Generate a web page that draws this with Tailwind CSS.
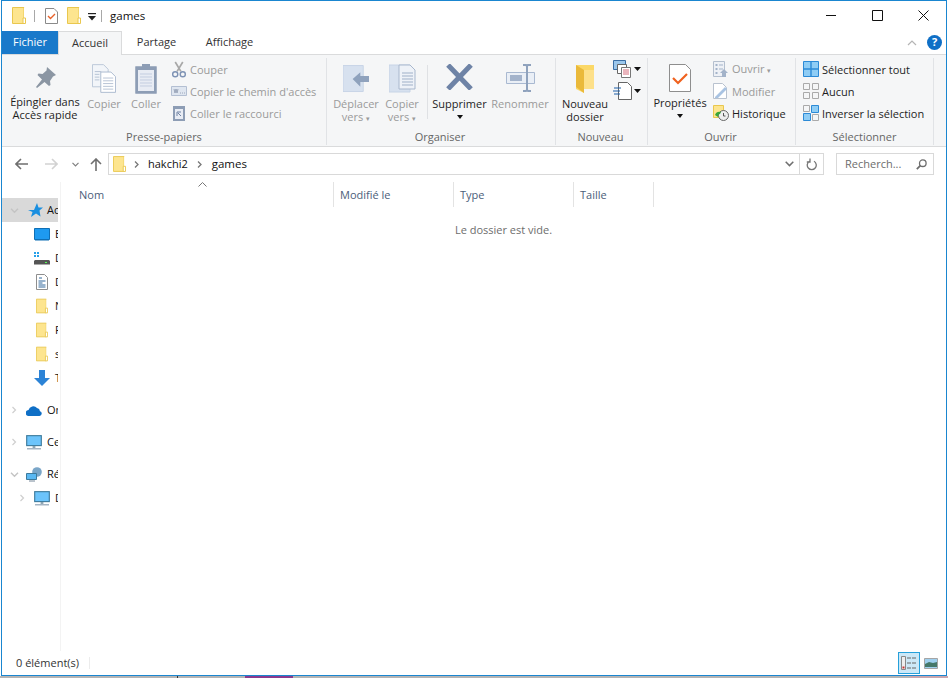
<!DOCTYPE html>
<html lang="fr">
<head>
<meta charset="utf-8">
<title>games</title>
<script src="https://cdn.jsdelivr.net/npm/@tailwindcss/browser@4"></script>
</head>
<body class="w-[948px] h-[678px] overflow-hidden bg-white relative font-['Open_Sans','Noto_Sans',sans-serif] text-[11px] text-[#1e1e1e]">
<svg class="hidden">
  <symbol id="fold" viewBox="0 0 14 17"><path d="M.5.5h11.5v16H.5z" fill="#fde58f" stroke="#e9c74e"/><path d="M12 .5h1.2v12H12z" fill="#fff"/><path d="M11 11h2.5v5.5H11z" fill="#fff" stroke="#e9c74e"/></symbol>
  <symbol id="pc" viewBox="0 0 17 16"><rect x=".7" y=".7" width="15.6" height="10.6" fill="#6cc4fb" stroke="#3d7a9c" stroke-width="1.2"/><path d="M7 12h3v1.6H7z" fill="#6b8a9c"/><path d="M1 14h15v1.4H1z" fill="#9ab"/></symbol>
  <symbol id="chev" viewBox="0 0 8 10"><path d="M2 1l4 4-4 4" fill="none" stroke="#cfcfcf" stroke-width="1.6"/></symbol>
  <symbol id="chevd" viewBox="0 0 10 8"><path d="M1 2l4 4 4-4" fill="none" stroke="#c4c4c4" stroke-width="1.6"/></symbol>
</svg>

<!-- desktop sliver below the window -->
<div class="absolute left-0 right-0 top-[676px] h-[2px] bg-[#b4b4b4]"></div>
<div class="absolute left-[177px] top-[676px] w-px h-[2px] bg-[#333]"></div>
<div class="absolute left-[245px] top-[676px] w-[48px] h-[2px] bg-[#8a3a8e]"></div>
<div class="absolute left-[910px] right-0 top-[676px] h-[2px] bg-[#c9a6ae]"></div>

<div class="absolute left-px top-0 w-[946px] h-[676px] border border-[#1a86d0] bg-white flex flex-col">

  <!-- title bar -->
  <div class="h-[29px] flex items-center shrink-0">
    <svg class="w-[14px] h-[17px] ml-[10px]"><use href="#fold"/></svg>
    <span class="w-px h-[12px] bg-[#a8a8a8] ml-[8px]"></span>
    <svg class="w-[13px] h-[16px] ml-[10px]" viewBox="0 0 13 16"><path d="M.5.5h8.500l3.500 3.500v11.500H.5z" fill="#fff" stroke="#8a8a8a"/><path d="M3 8l2.500 2.500L10 6" fill="none" stroke="#e8622a" stroke-width="1.400"/></svg>
    <svg class="w-[14px] h-[17px] ml-[9px]"><use href="#fold"/></svg>
    <svg class="w-[8px] h-[8px] ml-[7px] mt-[2px]" viewBox="0 0 8 8"><path d="M0 0h8v1.200H0z" fill="#222"/><path d="M0 3h8L4 7.500z" fill="#222"/></svg>
    <span class="w-px h-[12px] bg-[#a8a8a8] ml-[5px]"></span>
    <span class="ml-[8px] text-[#111] text-[11.5px]">games</span>
    <div class="ml-auto flex items-center mr-[17px]">
      <svg class="w-[11px] h-[11px]" viewBox="0 0 11 11"><path d="M0 5.500h10" stroke="#111" fill="none"/></svg>
      <svg class="w-[11px] h-[11px] ml-[35px]" viewBox="0 0 11 11"><path d="M.5.500h10v10H.5z" stroke="#111" fill="none"/></svg>
      <svg class="w-[11px] h-[11px] ml-[35px]" viewBox="0 0 11 11"><path d="M.5.500l10 10M10.500.500l-10 10" stroke="#111" fill="none"/></svg>
    </div>
  </div>

  <!-- tabs -->
  <div class="h-[25px] flex items-end relative shrink-0 border-b border-[#dadbdc] text-[#333]">
    <div class="w-[56px] h-[23px] bg-[#1979ca] text-white flex items-center justify-center">Fichier</div>
    <div class="w-[64px] h-[24px] -mb-px bg-[#f5f6f7] border border-b-0 border-[#dadbdc] flex items-center justify-center">Accueil</div>
    <div class="w-[69px] h-[23px] flex items-center justify-center">Partage</div>
    <div class="w-[77px] h-[23px] flex items-center justify-center">Affichage</div>
    <div class="ml-auto flex items-center h-[23px] mr-[4px]">
      <svg class="w-[10px] h-[6px]" viewBox="0 0 10 6"><path d="M1 5l4-4 4 4" fill="none" stroke="#b5b5b5" stroke-width="1.200"/></svg>
      <span class="ml-[10px] w-[15px] h-[15px] rounded-full bg-[#0f6fc6] text-white text-[11px] font-bold flex items-center justify-center">?</span>
    </div>
  </div>

  <!-- ribbon -->
  <div class="h-[92px] shrink-0 flex bg-[#f5f6f7] border-b border-[#dadbdc] leading-[13px]">

    <!-- Presse-papiers -->
    <div class="w-[325px] flex flex-col mt-[3px] mb-[1px] border-r border-[#e1e3e6]">
      <div class="flex flex-1 pl-[4px]">
        <div class="w-[78px] flex flex-col items-center pt-[5px]">
          <svg class="w-[24px] h-[24px] mb-[5px] mt-[3px]" viewBox="0 0 24 24"><path d="M14 1l9 8-3 1.500-3 4.500.5 4-1.500 1-4.500-4L4 22l-1-1 6-7.500-4.500-4.500 1-1.500 4 .5 4-3.500z" fill="#8b96a3"/></svg>
          <span class="text-center">Épingler dans<br>Accès rapide</span>
        </div>
        <div class="w-[40px] flex flex-col items-center pt-[5px] text-[#9a9a9a]">
          <svg class="w-[24px] h-[31px] mb-[3px]" viewBox="0 0 26 31"><path d="M.5.500h12l5 5v19H.5z" fill="#f2f5f9" stroke="#b7c4d6"/><path d="M9.500 8.500h11l5 5v17h-16z" fill="#fff" stroke="#a8b7cd"/><path d="M12 15h11M12 18h11M12 21h11M12 24h11M12 27h11M3 8h7M3 11h5M3 14h5M3 17h5" stroke="#b3c0d3"/></svg>
          <span>Copier</span>
        </div>
        <div class="w-[44px] flex flex-col items-center pt-[5px] text-[#9a9a9a]">
          <svg class="w-[22px] h-[31px] mb-[3px]" viewBox="0 0 22 31"><rect x=".8" y="3.800" width="20.400" height="26.400" fill="#8d9db5" stroke="#8d9db5"/><rect x="3" y="7" width="16" height="21" fill="#e8ecf4"/><path d="M5 11h12M5 14h12M5 17h12M5 20h12M5 23h12" stroke="#c3cde0"/><rect x="7" y="1" width="8" height="5" fill="#8d9db5"/></svg>
          <span>Coller</span>
        </div>
        <div class="flex flex-col ml-[3px] pt-0 text-[#9a9a9a]">
          <div class="h-[22px] flex items-center gap-[3px]">
            <svg class="w-[16px] h-[17px]" viewBox="0 0 16 18"><path d="M4 1l6 10M12 1L6 11" stroke="#a8a8a8" stroke-width="1.800" fill="none"/><circle cx="4" cy="14" r="2.700" fill="none" stroke="#7d92b4" stroke-width="1.500"/><circle cx="12" cy="14" r="2.700" fill="none" stroke="#7d92b4" stroke-width="1.500"/></svg>
            <span>Couper</span>
          </div>
          <div class="h-[22px] flex items-center gap-[3px]">
            <svg class="w-[16px] h-[10px]" viewBox="0 0 16 10"><path d="M.5.500h15v9H.5z" fill="#dfe6f0" stroke="#b3bfd2"/><path d="M3 3l1 4 1-4 1 4 1-4M9 7h1M11 7h1M13 7h1" stroke="#8a97ad" fill="none" stroke-width=".8"/></svg>
            <span>Copier le chemin d'accès</span>
          </div>
          <div class="h-[22px] flex items-center gap-[3px]">
            <svg class="w-[16px] h-[16px]" viewBox="0 0 16 16"><rect x="2" y="1" width="12" height="15" fill="#8d9db5"/><rect x="4" y="4" width="8" height="10" fill="#e8ecf4"/><path d="M6 11V7h4M7 8l3 3" stroke="#6f82a3" fill="none"/></svg>
            <span>Coller le raccourci</span>
          </div>
        </div>
      </div>
      <div class="h-[17px] flex items-center justify-center text-[#666]">Presse-papiers</div>
    </div>

    <!-- Organiser -->
    <div class="w-[229px] flex flex-col mt-[3px] mb-[1px] border-r border-[#e1e3e6]">
      <div class="flex flex-1 pl-[4px]">
        <div class="w-[50px] flex flex-col items-center pt-[6px] text-[#9a9a9a]">
          <svg class="w-[26px] h-[30px] mb-[3px]" viewBox="0 0 27 30"><path d="M0 1h21v27H0z" fill="#d7e1ef" stroke="#c7d4e6"/><path d="M10 15l8-7v4h9v6h-9v5z" fill="#8fa2bd"/></svg>
          <span class="text-center">Déplacer<br>vers <span class="text-[7px] align-middle">▾</span></span>
        </div>
        <div class="w-[42px] flex flex-col items-center pt-[6px] text-[#9a9a9a]">
          <svg class="w-[27px] h-[30px] mb-[3px]" viewBox="0 0 27 30"><path d="M0 1h21v27H0z" fill="#d7e1ef" stroke="#c7d4e6"/><path d="M10 1h11l5 5v19H10z" fill="#eef2f8" stroke="#a8b7cd"/><path d="M13 9h11M13 12h11M13 15h11M13 18h11M13 21h11" stroke="#9fb0c8"/></svg>
          <span class="text-center">Copier<br>vers <span class="text-[7px] align-middle">▾</span></span>
        </div>
        <div class="w-px h-[54px] bg-[#dfe1e4] mt-[7px] ml-[4px]"></div>
        <div class="w-[63px] flex flex-col items-center pt-[6px]">
          <svg class="w-[27px] h-[26px] mb-[7px]" viewBox="0 0 27 26"><path d="M2 1l23 24M25 1L2 25" stroke="#6e83a6" stroke-width="5" fill="none"/></svg>
          <span>Supprimer</span>
          <svg class="w-[6px] h-[4px] mt-[5px]" viewBox="0 0 6 4"><path d="M0 0h6L3 4z" fill="#111"/></svg>
        </div>
        <div class="w-[58px] flex flex-col items-center pt-[6px] text-[#9a9a9a]">
          <svg class="w-[29px] h-[28px] mb-[5px]" viewBox="0 0 29 28"><path d="M.5 8.500h28v11H.5z" fill="#eaeff6" stroke="#a9b9d1"/><path d="M4 11h12v6H4z" fill="#a3b3cb"/><path d="M17 1h3l1 1 1-1h3M21 2v24M17 27h3l1-1 1 1h3" stroke="#8fa2bd" stroke-width="2" fill="none"/></svg>
          <span>Renommer</span>
        </div>
      </div>
      <div class="h-[17px] flex items-center justify-center pr-[2px] text-[#666]">Organiser</div>
    </div>

    <!-- Nouveau -->
    <div class="w-[92px] flex flex-col mt-[3px] mb-[1px] border-r border-[#e1e3e6]">
      <div class="flex flex-1 pl-[5px]">
        <div class="w-[48px] flex flex-col items-center pt-[7px]">
          <svg class="w-[19px] h-[29px] mb-[3px]" viewBox="0 0 19 29"><path d="M0 0h18v24H8v4L0 24z" fill="#fbd867"/><path d="M0 0l8 5v23L0 22z" fill="#eab93a"/><path d="M8 5h10v19H8z" fill="#fde08a"/></svg>
          <span class="text-center">Nouveau<br>dossier</span>
        </div>
        <div class="flex flex-col ml-[4px] pt-0">
          <div class="h-[22px] flex items-center gap-[1px]">
            <svg class="w-[20px] h-[18px]" viewBox="0 0 20 18"><path d="M.5.500h12v9H.5z" fill="#9cc7ec" stroke="#3a6ea5"/><path d="M4.500 4.500h9v9h-9z" fill="#fff" stroke="#666"/><path d="M8.500 7.500h9v10h-9z" fill="#fff" stroke="#777"/><path d="M10 10h6M10 12h6M10 14h6" stroke="#d56a7a"/></svg>
            <svg class="w-[7px] h-[4px]" viewBox="0 0 7 4"><path d="M0 0h7L3.500 4z" fill="#111"/></svg>
          </div>
          <div class="h-[22px] flex items-center gap-[1px]">
            <svg class="w-[20px] h-[18px]" viewBox="0 0 20 18"><path d="M5.500.500h9l4 4v13h-13z" fill="#fff" stroke="#666"/><path d="M1 6h7M0 9h7M1 12h6" stroke="#1d5fa8"/></svg>
            <svg class="w-[7px] h-[4px]" viewBox="0 0 7 4"><path d="M0 0h7L3.500 4z" fill="#111"/></svg>
          </div>
        </div>
      </div>
      <div class="h-[17px] flex items-center justify-center pr-[2px] text-[#666]">Nouveau</div>
    </div>

    <!-- Ouvrir -->
    <div class="w-[148px] flex flex-col mt-[3px] mb-[1px] border-r border-[#e1e3e6]">
      <div class="flex flex-1 pl-[5px]">
        <div class="w-[54px] flex flex-col items-center pt-[6px]">
          <svg class="w-[22px] h-[28px] mb-[4px]" viewBox="0 0 22 28"><path d="M.5.500h16l5 5v22H.5z" fill="#fff" stroke="#8e8e8e"/><path d="M4 14l5 5 9-9" fill="none" stroke="#f0621f" stroke-width="2.200"/></svg>
          <span>Propriétés</span>
          <svg class="w-[6px] h-[4px] mt-[5px]" viewBox="0 0 6 4"><path d="M0 0h6L3 4z" fill="#111"/></svg>
        </div>
        <div class="flex flex-col ml-[6px] pt-0">
          <div class="h-[22px] flex items-center gap-[4px] text-[#9a9a9a]">
            <svg class="w-[15px] h-[16px]" viewBox="0 0 15 16"><path d="M.5.500h11v15H.5z" fill="#eef1f6" stroke="#b4bfce"/><path d="M2.500 3h2v2h-2zM2.500 7h2v2h-2zM2.500 11h2v2h-2z" fill="#a3b3c9"/><path d="M6 4h4M6 8h4" stroke="#a3b3c9"/><path d="M11 8l4 4h-2v4h-4v-4H7z" fill="#a3b3c9"/></svg>
            <span>Ouvrir <span class="text-[7px] align-middle">▾</span></span>
          </div>
          <div class="h-[22px] flex items-center gap-[4px] text-[#9a9a9a]">
            <svg class="w-[15px] h-[16px]" viewBox="0 0 15 16"><path d="M.5.500h9l4 4v11H.5z" fill="#fff" stroke="#b9c2cf"/><path d="M2 14L12 4l2 2L5 15H2z" fill="#a9c3e2"/></svg>
            <span>Modifier</span>
          </div>
          <div class="h-[22px] flex items-center gap-[3px]">
            <svg class="w-[16px] h-[16px]" viewBox="0 0 16 16"><path d="M.5.500h10v12H.5z" fill="#fde58f" stroke="#e9c74e"/><circle cx="10.500" cy="10.500" r="5" fill="#eee" stroke="#666"/><path d="M10.500 8v3h2" stroke="#555" fill="none"/><path d="M2 10a5 5 0 0 1 6-3l-1 2h-1l-1 3-3-2z" fill="#3aa63a"/></svg>
            <span>Historique</span>
          </div>
        </div>
      </div>
      <div class="h-[17px] flex items-center justify-center pr-[2px] text-[#666]">Ouvrir</div>
    </div>

    <!-- Sélectionner -->
    <div class="w-[138px] flex flex-col mt-[3px] mb-[1px] border-r border-[#e1e3e6]">
      <div class="flex flex-col flex-1 pl-[7px] pt-0">
        <div class="h-[22px] flex items-center gap-[3px]">
          <svg class="w-[16px] h-[16px]" viewBox="0 0 16 16"><path d="M.5.500h15v15H.5z" fill="#8fcdf5" stroke="#2c8ad6"/><path d="M8 0v16M0 8h16" stroke="#2c8ad6" stroke-width="1.400"/></svg>
          <span>Sélectionner tout</span>
        </div>
        <div class="h-[22px] flex items-center gap-[3px]">
          <svg class="w-[16px] h-[16px]" viewBox="0 0 16 16"><path d="M.5.500h6v6h-6zM9.500.500h6v6h-6zM.5 9.500h6v6h-6zM9.500 9.500h6v6h-6z" fill="none" stroke="#aaa"/></svg>
          <span>Aucun</span>
        </div>
        <div class="h-[22px] flex items-center gap-[3px]">
          <svg class="w-[16px] h-[16px]" viewBox="0 0 16 16"><path d="M.5.500h6v6h-6zM9.500 9.500h6v6h-6z" fill="none" stroke="#aaa"/><path d="M8.500.500h7v7h-7zM.5 8.500h7v7h-7z" fill="#8fcdf5" stroke="#2c8ad6"/></svg>
          <span>Inverser la sélection</span>
        </div>
      </div>
      <div class="h-[17px] flex items-center justify-center text-[#666]">Sélectionner</div>
    </div>
  </div>

  <!-- address row -->
  <div class="h-[35px] shrink-0 flex items-center pb-[1px]">
    <svg class="w-[13px] h-[12px] ml-[13px]" viewBox="0 0 13 12"><path d="M6 1L1 6l5 5M1 6h12" fill="none" stroke="#6f6f6f" stroke-width="1.600"/></svg>
    <svg class="w-[13px] h-[12px] ml-[17px]" viewBox="0 0 13 12"><path d="M7 1l5 5-5 5M12 6H0" fill="none" stroke="#d2d2d2" stroke-width="1.600"/></svg>
    <svg class="w-[7px] h-[5px] ml-[14px]" viewBox="0 0 7 5"><path d="M.5.800l3 3 3-3" fill="none" stroke="#7f7f7f" stroke-width="1.200"/></svg>
    <svg class="w-[12px] h-[13px] ml-[11px]" viewBox="0 0 12 13"><path d="M1 6l5-5 5 5M6 1v12" fill="none" stroke="#6f6f6f" stroke-width="1.600"/></svg>
    <div class="w-[716px] h-[22px] ml-[6px] border border-[#d9d9d9] flex items-center text-[#111]">
      <svg class="w-[13px] h-[16px] ml-[4px]"><use href="#fold"/></svg>
      <svg class="w-[5px] h-[7px] ml-[8px]" viewBox="0 0 5 7"><path d="M1 .5l3 3-3 3" fill="none" stroke="#777" stroke-width="1.300"/></svg>
      <span class="ml-[9px]">hakchi2</span>
      <svg class="w-[5px] h-[7px] ml-[9px]" viewBox="0 0 5 7"><path d="M1 .5l3 3-3 3" fill="none" stroke="#777" stroke-width="1.300"/></svg>
      <span class="ml-[10px] text-[11.5px]">games</span>
      <svg class="w-[9px] h-[6px] ml-auto mr-[5px]" viewBox="0 0 9 6"><path d="M.7.800L4.500 4.600 8.300.800" fill="none" stroke="#6f6f6f" stroke-width="1.500"/></svg>
      <span class="w-px h-full bg-[#d9d9d9]"></span>
      <svg class="w-[11px] h-[13px] mx-[6px]" viewBox="0 0 11 13"><path d="M3.500 3.200A4.500 4.500 0 1 0 8 3.200M4 .5v3.500H.8" fill="none" stroke="#777" stroke-width="1.300"/></svg>
    </div>
    <div class="w-[98px] h-[22px] ml-[12px] border border-[#d9d9d9] flex items-center pl-[8px] text-[#6d6d6d]">
      <span>Recherch...</span>
      <svg class="w-[11px] h-[11px] ml-auto mr-[6px]" viewBox="0 0 11 11"><circle cx="6.800" cy="4.200" r="3.300" fill="none" stroke="#6d6d6d" stroke-width="1.300"/><path d="M4.300 6.700L.8 10.200" stroke="#6d6d6d" stroke-width="1.800"/></svg>
    </div>
  </div>

  <!-- body -->
  <div class="flex-1 flex min-h-0">
    <!-- sidebar -->
    <div class="w-[59px] shrink-0 border-r border-[#f3f3f3] text-[#111] pt-[16px] overflow-hidden">
      <div class="w-[56px] overflow-hidden whitespace-nowrap">
        <div class="h-[24px] flex items-center bg-[#d9d9d9]">
          <svg class="w-[9px] h-[7px] ml-[8px] shrink-0"><use href="#chevd"/></svg>
          <svg class="w-[15px] h-[14px] ml-[9px] shrink-0" viewBox="0 0 15 14"><path d="M9 0l1.500 4.500H15l-3.500 3 1 6L8 10.500 3 14l1.500-5L0 7h6z" fill="#1a8fe0"/></svg>
          <span class="ml-[4px]">Accès rapide</span>
        </div>
        <div class="h-[24px] flex items-center">
          <svg class="w-[16px] h-[13px] ml-[32px] shrink-0" viewBox="0 0 16 13"><path d="M.5.500h15v11H.5z" fill="#1e9af0" stroke="#0f6fb5"/><path d="M1 11h14v1.500H1z" fill="#0f6fb5"/></svg>
          <span class="ml-[5px]">E</span>
        </div>
        <div class="h-[24px] flex items-center">
          <svg class="w-[16px] h-[13px] ml-[32px] shrink-0" viewBox="0 0 16 13"><path d="M0 0h2v2H0zM3 0h2v2H3zM0 3h2v2H0zM3 3h2v2H3z" fill="#28a0e8"/><path d="M1 8h14l1 1v3.500H0V9z" fill="#555"/><path d="M11 10h2v1h-2z" fill="#5f5"/></svg>
          <span class="ml-[5px]">D</span>
        </div>
        <div class="h-[24px] flex items-center">
          <svg class="w-[12px] h-[16px] ml-[34px] shrink-0" viewBox="0 0 12 16"><path d="M.5.500h8l3 3v12H.5z" fill="#fff" stroke="#8e8e8e"/><path d="M3 4h3M2.500 7h7M2.500 9h4M2.500 11h7M2.500 13h7" stroke="#33699c"/></svg>
          <span class="ml-[7px]">D</span>
        </div>
        <div class="h-[24px] flex items-center">
          <svg class="w-[12px] h-[16px] ml-[34px] shrink-0"><use href="#fold"/></svg>
          <span class="ml-[7px]">N</span>
        </div>
        <div class="h-[24px] flex items-center">
          <svg class="w-[12px] h-[16px] ml-[34px] shrink-0"><use href="#fold"/></svg>
          <span class="ml-[7px]">F</span>
        </div>
        <div class="h-[24px] flex items-center">
          <svg class="w-[12px] h-[16px] ml-[34px] shrink-0"><use href="#fold"/></svg>
          <span class="ml-[7px]">s</span>
        </div>
        <div class="h-[24px] flex items-center">
          <svg class="w-[16px] h-[16px] ml-[32px] shrink-0" viewBox="0 0 16 16"><path d="M5 0h6v8h5l-8 8-8-8h5z" fill="#2c83d6"/></svg>
          <span class="ml-[5px]">T</span>
        </div>
        <div class="h-[8px]"></div>
        <div class="h-[24px] flex items-center">
          <svg class="w-[6px] h-[10px] ml-[9px] shrink-0"><use href="#chev"/></svg>
          <svg class="w-[16px] h-[11px] ml-[9px] shrink-0" viewBox="0 0 16 11"><path d="M3 11a3 3 0 0 1-.5-6A5 5 0 0 1 11 3a3.800 3.800 0 0 1 3 3.300A2.400 2.400 0 0 1 13.500 11z" fill="#0f6fc6"/></svg>
          <span class="ml-[5px]">OneDrive</span>
        </div>
        <div class="h-[8px]"></div>
        <div class="h-[24px] flex items-center">
          <svg class="w-[6px] h-[10px] ml-[9px] shrink-0"><use href="#chev"/></svg>
          <svg class="w-[16px] h-[15px] ml-[9px] shrink-0"><use href="#pc"/></svg>
          <span class="ml-[5px]">Ce PC</span>
        </div>
        <div class="h-[8px]"></div>
        <div class="h-[24px] flex items-center">
          <svg class="w-[9px] h-[7px] ml-[8px] shrink-0"><use href="#chevd"/></svg>
          <svg class="w-[16px] h-[15px] ml-[7px] shrink-0" viewBox="0 0 16 15"><circle cx="11" cy="5" r="4.800" fill="#7aa6c8"/><path d="M.5 6.500h10v6h-10z" fill="#5ab8f2" stroke="#3d7a9c"/><path d="M3 14h6" stroke="#789"/></svg>
          <span class="ml-[5px]">Réseau</span>
        </div>
        <div class="h-[24px] flex items-center">
          <svg class="w-[6px] h-[10px] ml-[17px] shrink-0"><use href="#chev"/></svg>
          <svg class="w-[16px] h-[15px] ml-[9px] shrink-0"><use href="#pc"/></svg>
          <span class="ml-[5px]">D</span>
        </div>
      </div>
    </div>

    <!-- list -->
    <div class="flex-1 min-w-0 flex flex-col relative">
      <svg class="absolute left-[137px] top-[0px] w-[9px] h-[5px]" viewBox="0 0 9 5"><path d="M.5 4.500l4-4 4 4" fill="none" stroke="#777"/></svg>
      <div class="flex h-[25px] text-[#4c607a]">
        <div class="w-[273px] pl-[18px] pt-[2px] flex items-center border-r border-[#e3e3e3]">Nom</div>
        <div class="w-[120px] pl-[6px] pt-[2px] flex items-center border-r border-[#e3e3e3]">Modifié le</div>
        <div class="w-[120px] pl-[6px] pt-[2px] flex items-center border-r border-[#e3e3e3]">Type</div>
        <div class="w-[80px] pl-[6px] pt-[2px] flex items-center border-r border-[#e3e3e3]">Taille</div>
      </div>
      <div class="text-center text-[#6d6d6d] w-full mt-[15px]">Le dossier est vide.</div>
    </div>
  </div>

  <!-- status bar -->
  <div class="h-[24px] shrink-0 flex items-center relative text-[#333]">
    <span class="ml-[14px]">0 élément(s)</span>
    <span class="w-px h-[12px] bg-[#ececec] ml-[10px]"></span>
    <div class="ml-auto flex items-center mr-[5px]">
      <div class="w-[22px] h-[22px] bg-[#cce8f7] border border-[#26a0da] flex items-center justify-center">
        <svg class="w-[16px] h-[14px]" viewBox="0 0 16 14"><path d="M.5.500h4v13h-4z" fill="#eee" stroke="#888"/><path d="M1.500 10.500h2v2h-2z" fill="#c33"/><path d="M6 2h4M11 2h4M6 7h4M11 7h4M6 12h4M11 12h4" stroke="#666" stroke-width="1.200"/></svg>
      </div>
      <div class="w-[20px] h-[22px] flex items-center justify-center ml-[1px]">
        <svg class="w-[14px] h-[11px]" viewBox="0 0 14 11"><path d="M.5.500h13v10H.5z" fill="#9fd0ef" stroke="#a5a5a5"/><path d="M1 6l4-2 4 1 4-1v5H1z" fill="#45786a"/></svg>
      </div>
    </div>
  </div>
</div>
</body>
</html>
